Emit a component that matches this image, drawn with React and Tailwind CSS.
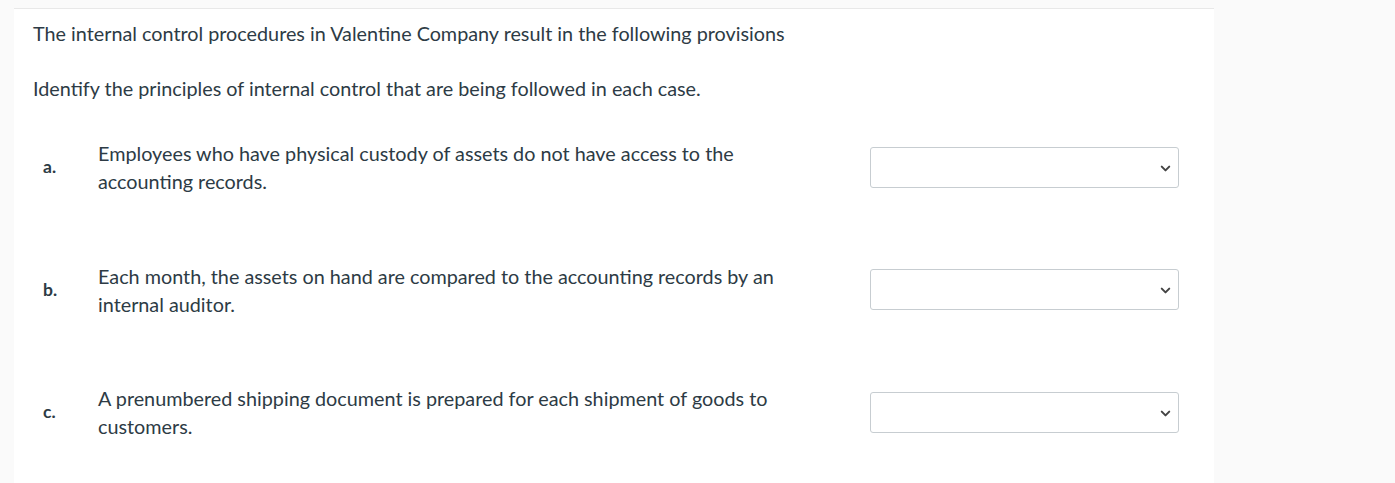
import { ChevronDown } from 'lucide-react';

const items = [
  { label: 'a.', text: 'Employees who have physical custody of assets do not have access to the accounting records.' },
  { label: 'b.', text: 'Each month, the assets on hand are compared to the accounting records by an internal auditor.' },
  { label: 'c.', text: 'A prenumbered shipping document is prepared for each shipment of goods to customers.' },
];

export default function App() {
  return (
    <div className="h-[483px] overflow-hidden bg-[#fafafa] pt-2 font-['Lato',sans-serif] text-[#2d3b45]">
      <div className="ml-[14px] w-[1200px] min-h-[480px] border-t border-[#e8e8e8] bg-white">
        <p className="pl-[19px] pt-[11px] text-[19.8px] leading-[27px]">
          The internal control procedures in Valentine Company result in the following provisions
        </p>
        <p className="pl-[19px] mt-[28px] text-[19.8px] leading-[27px]">
          Identify the principles of internal control that are being followed in each case.
        </p>

        <div className="mt-[4px]">
          {items.map((item) => (
            <div key={item.label} className="flex items-center h-[122.5px]">
              <div className="w-[84px] pl-[29px] text-[17.5px] font-bold">{item.label}</div>
              <div className="w-[700px] text-[19.8px] leading-[28px]">{item.text}</div>
              <div className="ml-[72px] relative w-[309px] h-[41px] rounded-[3px] border border-[#c7cdd1] bg-white">
                <ChevronDown className="absolute right-[5px] top-[13px] w-[15px] h-[15px] text-[#444]" strokeWidth={3.2} />
              </div>
            </div>
          ))}
        </div>
      </div>
    </div>
  );
}
